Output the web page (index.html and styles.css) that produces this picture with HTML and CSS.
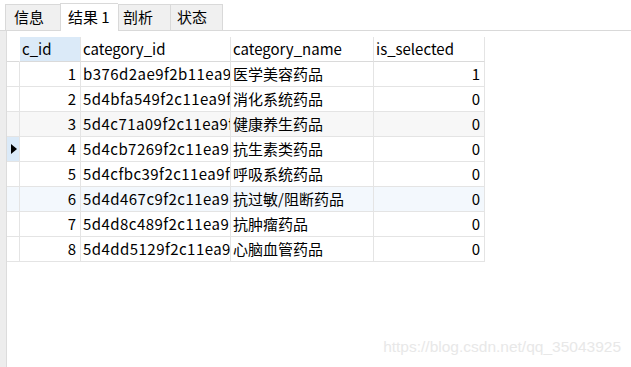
FILE: index.html
```html
<!DOCTYPE html>
<html lang="zh-CN">
<head>
    <meta charset="UTF-8">
    <title>结果 1</title>
    <link rel="stylesheet" href="styles.css">
</head>
<body>
    <div class="tabs">
        <div class="tab">信息</div>
        <div class="tab active">结果 1</div>
        <div class="tab">剖析</div>
        <div class="tab">状态</div>
    </div>
    <div class="main">
        <div class="gutter"></div>
        <div class="grid">
            <div class="hd ind"></div>
            <div class="hd sel">c_id</div>
            <div class="hd">category_id</div>
            <div class="hd">category_name</div>
            <div class="hd">is_selected</div>
        </div>
    </div>
    <div class="mark">https://blog.csdn.net/qq_35043925</div>
    <script>
        var rows = [
            [1, "b376d2ae9f2b11ea9", "医学美容药品", 1],
            [2, "5d4bfa549f2c11ea9f", "消化系统药品", 0],
            [3, "5d4c71a09f2c11ea9f", "健康养生药品", 0],
            [4, "5d4cb7269f2c11ea9", "抗生素类药品", 0],
            [5, "5d4cfbc39f2c11ea9f", "呼吸系统药品", 0],
            [6, "5d4d467c9f2c11ea9", "抗过敏/阻断药品", 0],
            [7, "5d4d8c489f2c11ea9", "抗肿瘤药品", 0],
            [8, "5d4dd5129f2c11ea9", "心脑血管药品", 0]
        ];
        var grid = document.querySelector(".grid");
        //逐行生成单元格
        for (var i = 0; i < rows.length; i++) {
            var cls = "";
            if (i == 2) cls = " gray";
            if (i == 5) cls = " blue";
            var ind = document.createElement("div");
            ind.className = "cell ind" + cls + (i == 3 ? " cur" : "");
            grid.appendChild(ind);
            for (var j = 0; j < rows[i].length; j++) {
                var c = document.createElement("div");
                c.className = "cell" + cls + (j == 0 || j == 3 ? " num" : "") + (j == 1 ? " uid" : "");
                c.innerText = rows[i][j];
                grid.appendChild(c);
            }
        }
    </script>
</body>
</html>
```
FILE: styles.css
```css
body{
    margin: 0;
    background: #fff;
    font-family: "Noto Sans CJK SC", "Microsoft YaHei", sans-serif;
    font-size: 15px;
    color: #000;
    height: 367px;
    position: relative;
    overflow: hidden;
}
.tabs{
    display: flex;
    align-items: flex-end;
    height: 30px;
    padding-left: 5px;
    border-bottom: 1px solid #d9d9d9;
}
.tab{
    box-sizing: border-box;
    height: 26px;
    line-height: 24px;
    border: 1px solid #d9d9d9;
    border-bottom: none;
    border-right: none;
    background: #f0f0f0;
    padding-left: 8px;
}
.tab:nth-child(1){ width: 55px; }
.tab:nth-child(2){ width: 58px; }
.tab:nth-child(3){ width: 52px; padding-left: 4px; }
.tab:nth-child(4){ width: 53px; padding-left: 6px; border-right: 1px solid #d9d9d9; }
.tab.active{
    height: 28px;
    margin-bottom: -1px;
    background: #fff;
    line-height: 26px;
    padding-left: 7px;
}
.main{
    display: flex;
    height: 336px;
}
.gutter{
    width: 6px;
    background: #ededed;
    border-right: 1px solid #dcdcdc;
}
.grid{
    display: grid;
    grid-template-columns: 13px 61px 150px 143px 111px;
    grid-auto-rows: 25px;
    align-content: start;
    margin-top: 6px;
}
.hd, .cell{
    box-sizing: border-box;
    border-right: 1px solid #e4e4e4;
    border-bottom: 1px solid #e4e4e4;
    line-height: 24px;
    white-space: nowrap;
    overflow: hidden;
    padding: 0 2px;
}
.hd{
    border-bottom-color: #dadada;
}
.hd.ind{
    border-right-color: transparent;
}
.sel{
    background: #dbeaf8;
}
.ind{
    padding: 0;
    position: relative;
}
.num{
    text-align: right;
    padding-right: 4px;
}
.uid{
    letter-spacing: 0.45px;
}
.gray{
    background: #f7f7f7;
}
.blue{
    background: #f3f8fd;
}
.cur{
    background: #dbeaf8;
}
.cur::after{
    content: "";
    position: absolute;
    left: 4px;
    top: 7px;
    border-left: 6px solid #000;
    border-top: 5px solid transparent;
    border-bottom: 5px solid transparent;
}
.mark{
    position: absolute;
    right: 10px;
    bottom: 11px;
    font-family: "Liberation Sans", Arial, sans-serif;
    font-size: 15.5px;
    color: #e8e8e8;
}
```
